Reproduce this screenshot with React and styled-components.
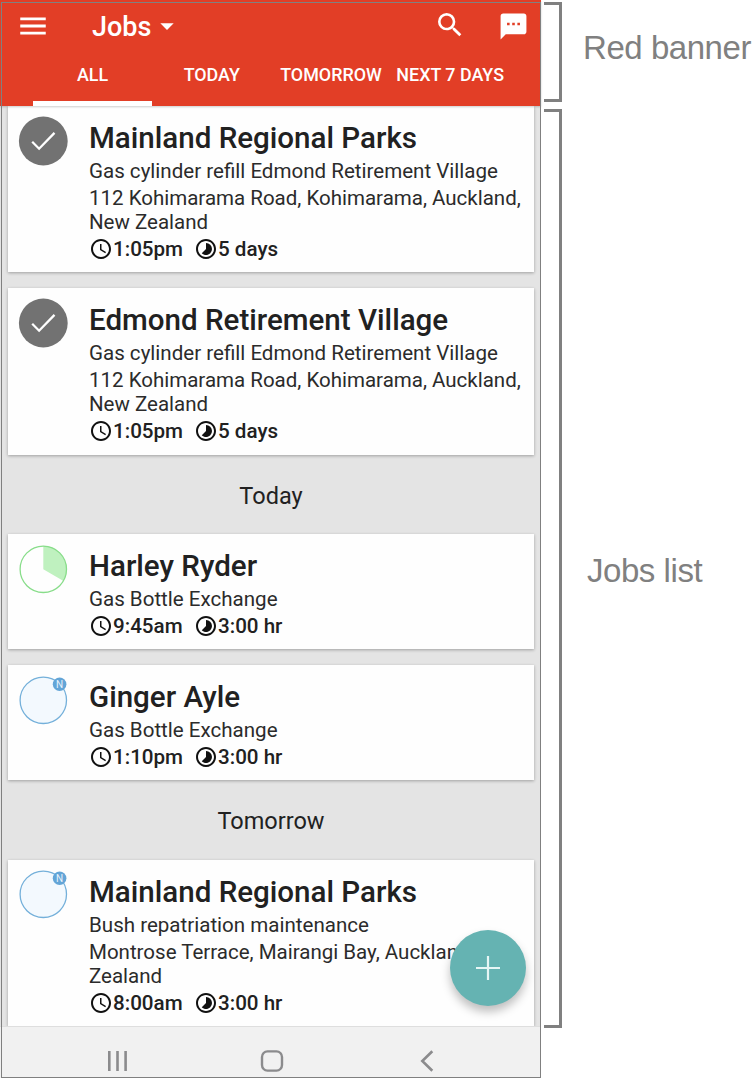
import styled, { createGlobalStyle } from 'styled-components'
import { MdMenu, MdSearch, MdSms, MdArrowDropDown, MdAccessTime, MdTimelapse } from 'react-icons/md'

export default function App() {
    return <Page>
        <GlobalStyle />
        <Phone>
            <Banner>
                <Toolbar>
                    <MdMenu size={34} />
                    <Title>Jobs</Title>
                    <MdArrowDropDown size={32} />
                    <Actions>
                        <MdSearch size={32} />
                        <MdSms size={31} />
                    </Actions>
                </Toolbar>
                <Tabs>
                    {tabs.map(value => <Tab key={value} $active={value === 'ALL'}>{value}</Tab>)}
                </Tabs>
            </Banner>
            <List>
                {sections.map((section, index) => {
                    return <section key={index}>
                        {section.heading && <Heading>{section.heading}</Heading>}
                        <Cards>
                            {section.jobs.map(job => <JobCard key={job.name} job={job} />)}
                        </Cards>
                    </section>
                })}
            </List>
            <NavBar>
                <svg width='20' height='22' viewBox='0 0 20 22' fill='none' stroke='#8b8b8d' strokeWidth='2.6'>
                    <path d='M2.3 1v20M10.5 1v20M18.6 1v20' />
                </svg>
                <HomeIcon width='24' height='22' viewBox='0 0 24 22' fill='none' stroke='#8b8b8d' strokeWidth='2.4'>
                    <rect x='2' y='1.4' width='20' height='19.2' rx='5.5' />
                </HomeIcon>
                <svg width='14' height='22' viewBox='0 0 14 22' fill='none' stroke='#8b8b8d' strokeWidth='2.6'>
                    <path d='M12.3 1.2L2.3 11l10 9.8' />
                </svg>
            </NavBar>
            <AddButton>
                <svg width='26' height='26' viewBox='0 0 26 26' stroke='#e6f6f5' strokeWidth='2.2'>
                    <path d='M13 1v24M1 13h24' />
                </svg>
            </AddButton>
        </Phone>
        <Brackets>
            <Bracket $height={100} />
            <Bracket $height={919} />
        </Brackets>
        <Notes>
            <Note>Red banner</Note>
            <Note $indent={4}>Jobs list</Note>
        </Notes>
    </Page>
}

function JobCard({ job }) {
    return <Card>
        <StatusIcon status={job.status} />
        <div>
            <Name>{job.name}</Name>
            <Summary>{job.summary}</Summary>
            {job.address && <Address>{job.address}</Address>}
            <Meta>
                <MetaItem $width={105}><MdAccessTime size={24} />{job.time}</MetaItem>
                <MetaItem><MdTimelapse size={24} />{job.length}</MetaItem>
            </Meta>
        </div>
    </Card>
}

function StatusIcon({ status }) {
    return <Status viewBox='0 0 50 50'>
        {status === 'done' && <>
            <circle cx='25.3' cy='25' r='24.4' fill='#727272' />
            <path d='M14.2 25.8l6.9 6.9L36.5 16.9' fill='none' stroke='#fff' strokeWidth='2.3' />
        </>}
        {status === 'started' && <>
            <path d='M25.3 25.3V2A23.3 23.3 0 0 1 45.5 37z' fill='#bff1bf' />
            <circle cx='25.3' cy='25.3' r='23.2' fill='none' stroke='#88dd8a' strokeWidth='1.3' />
        </>}
        {status === 'new' && <>
            <circle cx='25.3' cy='25.3' r='23.2' fill='#f3f9fe' stroke='#74b0da' strokeWidth='1.3' />
            <circle cx='41.6' cy='9.2' r='6.8' fill='#63a5d7' />
            <text x='41.6' y='12.8' textAnchor='middle' fontSize='10' fill='#e8f3fb'>N</text>
        </>}
    </Status>
}

const tabs = ['ALL', 'TODAY', 'TOMORROW', 'NEXT 7 DAYS']

const sections = [{
    jobs: [{
        name: 'Mainland Regional Parks',
        summary: 'Gas cylinder refill Edmond Retirement Village',
        address: '112 Kohimarama Road, Kohimarama, Auckland, New Zealand',
        time: '1:05pm',
        length: '5 days',
        status: 'done'
    }, {
        name: 'Edmond Retirement Village',
        summary: 'Gas cylinder refill Edmond Retirement Village',
        address: '112 Kohimarama Road, Kohimarama, Auckland, New Zealand',
        time: '1:05pm',
        length: '5 days',
        status: 'done'
    }]
}, {
    heading: 'Today',
    jobs: [{
        name: 'Harley Ryder',
        summary: 'Gas Bottle Exchange',
        time: '9:45am',
        length: '3:00 hr',
        status: 'started'
    }, {
        name: 'Ginger Ayle',
        summary: 'Gas Bottle Exchange',
        time: '1:10pm',
        length: '3:00 hr',
        status: 'new'
    }]
}, {
    heading: 'Tomorrow',
    jobs: [{
        name: 'Mainland Regional Parks',
        summary: 'Bush repatriation maintenance',
        address: 'Montrose Terrace, Mairangi Bay, Auckland, New Zealand',
        time: '8:00am',
        length: '3:00 hr',
        status: 'new'
    }]
}]

const GlobalStyle = createGlobalStyle`
    * {
        box-sizing: border-box;
    }
    body {
        margin: 0;
        background: #fff;
        font-family: Roboto, sans-serif;
    }
    svg {
        flex-shrink: 0;
    }
`;

const Page = styled.div`
    display: flex;
    width: 752px;
    height: 1079px;
    overflow: hidden;
`;

const Phone = styled.div`
    position: relative;
    display: flex;
    flex-direction: column;
    width: 541px;
    height: 1078px;
    flex-shrink: 0;

    &::after {
        content: '';
        position: absolute;
        inset: 2px 0 0 1px;
        border: 1px solid #808080;
        pointer-events: none;
        z-index: 2;
    }
`;

const Banner = styled.header`
    height: 106px;
    flex-shrink: 0;
    background: #e23e26;
    color: #fff;
    box-shadow: 0 1px 2px rgba(0, 0, 0, 0.2);
    z-index: 1;
`;

const Toolbar = styled.div`
    display: flex;
    align-items: center;
    height: 51px;
    padding: 0 12px 0 15.5px;
`;

const Title = styled.h1`
    margin: 3px 0 0 42.5px;
    width: 59px;
    font-size: 27px;
    font-weight: 500;
    white-space: nowrap;
`;

const Actions = styled.div`
    display: flex;
    align-items: center;
    gap: 32px;
    margin: -1px 0 0 auto;

    svg + svg {
        margin-top: 3px;
    }
`;

const Tabs = styled.nav`
    display: flex;
    padding-left: 33px;
`;

const Tab = styled.div`
    width: 119.2px;
    height: 55px;
    border-bottom: 5px solid ${props => props.$active ? '#fff' : 'transparent'};
    font-size: 17.9px;
    font-weight: 500;
    line-height: 48px;
    text-align: center;
    white-space: nowrap;
`;

const List = styled.main`
    height: 920px;
    padding: 0.4px 7px 0 8px;
    overflow: hidden;
    background: #e4e4e4;
`;

const Heading = styled.h2`
    margin: 0;
    height: 79.5px;
    font-size: 23.5px;
    font-weight: 400;
    line-height: 82px;
    text-align: center;
    color: #212121;
`;

const Cards = styled.div`
    display: flex;
    flex-direction: column;
    gap: 16px;
`;

const Card = styled.article`
    display: flex;
    gap: 21px;
    padding: 14px 8px 10.1px 10px;
    background: #fefefe;
    box-shadow: 0 1px 3px rgba(0, 0, 0, 0.3);
    color: #212121;
`;

const Status = styled.svg`
    width: 50px;
    height: 50px;
    margin-top: -4.4px;
`;

const Name = styled.h3`
    margin: 0;
    font-size: 29.55px;
    font-weight: 500;
    line-height: 37px;
    white-space: nowrap;
`;

const Summary = styled.div`
    font-size: 20.55px;
    line-height: 28px;
    color: #2b2b2b;
`;

const Address = styled.div`
    margin: 1px 0 2px;
    font-size: 20.5px;
    line-height: 24px;
    color: #2b2b2b;
`;

const Meta = styled.div`
    display: flex;
    height: 26px;
    font-size: 20.6px;
    font-weight: 500;
`;

const MetaItem = styled.div`
    display: flex;
    align-items: center;
    width: ${props => props.$width ? `${props.$width}px` : 'auto'};
    white-space: nowrap;

    svg {
        color: #111;
    }
`;

const NavBar = styled.footer`
    display: flex;
    justify-content: space-between;
    height: 52px;
    padding: 22.5px 107px 0;
    border-top: 1px solid #dedede;
    background: #f1f1f1;
`;

const HomeIcon = styled.svg`
    margin-right: 4px;
`;

const AddButton = styled.button`
    position: absolute;
    right: 15px;
    bottom: 72px;
    display: flex;
    align-items: center;
    justify-content: center;
    width: 76px;
    height: 76px;
    padding: 0;
    border: 0;
    border-radius: 50%;
    background: #65b3b2;
    box-shadow: 0 6px 10px rgba(0, 0, 0, 0.25);
`;

const Brackets = styled.div`
    display: flex;
    flex-direction: column;
    gap: 7px;
    padding: 2px 0 0 3px;
`;

const Bracket = styled.div`
    width: 18px;
    height: ${props => props.$height}px;
    border: 3px solid #808080;
    border-left: 0;
`;

const Notes = styled.aside`
    display: flex;
    flex-direction: column;
    gap: 483px;
    padding: 28px 0 0 21px;
`;

const Note = styled.div`
    margin-left: ${props => props.$indent || 0}px;
    font-family: 'Liberation Sans', Arial, sans-serif;
    font-size: 33px;
    letter-spacing: -0.45px;
    line-height: 40px;
    white-space: nowrap;
    color: #808080;
`;
